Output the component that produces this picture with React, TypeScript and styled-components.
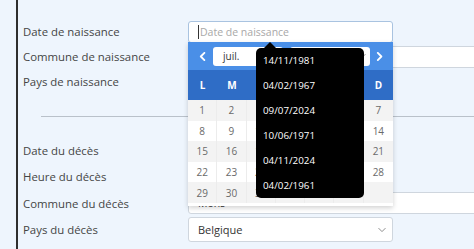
import styled, { createGlobalStyle } from "styled-components";

const GlobalStyle = createGlobalStyle`
  body {
    margin: 0;
    background: #eef5fd;
    overflow: hidden;
    font-family: "Open Sans", "Noto Sans", sans-serif;
  }
`;

const Page = styled.div`
  position: relative;
  margin-left: 16px;
  border-left: 2px solid #2e2e2e;
  height: 249px;
  width: 458px;
  overflow: hidden;
  padding-top: 19px;
  box-sizing: border-box;
`;

const Group = styled.div<{ $top: number }>`
  display: flex;
  flex-direction: column;
  margin-top: ${(p) => p.$top}px;
`;

const Row = styled.div<{ $h: number }>`
  display: grid;
  grid-template-columns: 170px auto;
  align-items: center;
  height: ${(p) => p.$h}px;
`;

const Label = styled.div`
  padding-left: 5px;
  font-size: 11.4px;
  color: #454545;
`;

const Field = styled.div<{ $w: number; $focus?: boolean }>`
  width: ${(p) => p.$w}px;
  height: 22px;
  box-sizing: border-box;
  background: #fff;
  border: 1px solid ${(p) => (p.$focus ? "#a9c3e0" : "#cfd6de")};
  border-radius: 3px;
  display: flex;
  align-items: center;
  padding-left: 9px;
  font-size: 10.5px;
  color: #333;
`;

const Placeholder = styled.span`
  color: #a8a8a8;
  border-left: 1px solid #333;
  padding-left: 1px;
`;

const SelectBox = styled(Field)`
  height: 25px;
  justify-content: space-between;
  padding-right: 6px;
  font-size: 11px;
`;

const Divider = styled.div`
  margin-top: 22px;
  margin-left: 23px;
  border-top: 1px solid #b9c1ca;
`;

const Calendar = styled.div`
  position: absolute;
  left: 170px;
  top: 42px;
  width: 205px;
  background: #fff;
  box-shadow: 0 2px 5px rgba(0, 0, 0, 0.18);
  padding-bottom: 3px;
`;

const CalHeader = styled.div`
  height: 28px;
  background: #4a8fe7;
  display: flex;
  align-items: center;
  padding-left: 10px;
  gap: 5px;
`;

const NavArrow = styled.div`
  width: 10px;
  display: flex;
  justify-content: center;
`;

const MiniSelect = styled.div<{ $w: number; $gap?: number }>`
  width: ${(p) => p.$w}px;
  margin-left: ${(p) => p.$gap ?? 0}px;
  height: 19px;
  box-sizing: border-box;
  background: #fff;
  border-radius: 3px;
  display: flex;
  align-items: center;
  justify-content: space-between;
  padding: 0 4px 0 10px;
  font-size: 10px;
  color: #333;
`;

const WeekDays = styled.div`
  height: 30px;
  background: #2f6dc6;
  display: grid;
  grid-template-columns: repeat(7, 1fr);
  align-items: center;
  text-align: center;
  font-size: 10px;
  font-weight: 700;
  color: #fff;
`;

const Week = styled.div<{ $shade: boolean }>`
  height: 20.6px;
  display: grid;
  grid-template-columns: repeat(7, 1fr);
  background: ${(p) => (p.$shade ? "#f3f3f3" : "#fff")};
`;

const Day = styled.div`
  display: flex;
  align-items: center;
  justify-content: center;
  font-size: 10px;
  color: #6a6a6a;
  border-right: 1px solid #ececec;
  &:last-child {
    border-right: none;
  }
`;

const Tooltip = styled.div`
  position: absolute;
  left: 238px;
  top: 48px;
  width: 108px;
  height: 150px;
  background: #000;
  border-radius: 5px;
  display: flex;
  flex-direction: column;
  &::before {
    content: "";
    position: absolute;
    left: 8px;
    top: -6px;
    border-left: 6px solid transparent;
    border-right: 6px solid transparent;
    border-bottom: 6px solid #000;
  }
`;

const TipItem = styled.div`
  height: 25px;
  display: flex;
  align-items: center;
  padding-left: 7px;
  font-size: 9.8px;
  color: #fff;
`;

const Chevron = ({ dir, color, size }: { dir: "left" | "right" | "down"; color: string; size: number }) => {
  const d = dir === "left" ? "M6 1 L2 5 L6 9" : dir === "right" ? "M2 1 L6 5 L2 9" : "M1 3 L5 7 L9 3";
  return (
    <svg width={size} height={size} viewBox="0 0 10 10">
      <path d={d} fill="none" stroke={color} strokeWidth={dir === "down" ? 1.2 : 2} strokeLinecap="round" strokeLinejoin="round" />
    </svg>
  );
};

const days: (number | null)[] = Array.from({ length: 35 }, (_, i) => (i < 31 ? i + 1 : null));
const weeks = [0, 1, 2, 3, 4].map((w) => days.slice(w * 7, w * 7 + 7));
const dates = ["14/11/1981", "04/02/1967", "09/07/2024", "10/06/1971", "04/11/2024", "04/02/1961"];

const App = () => {
  return (
    <>
      <GlobalStyle />
      <Page>
        <Group $top={0}>
          <Row $h={25}>
            <Label>Date de naissance</Label>
            <Field $w={205} $focus>
              <Placeholder>Date de naissance</Placeholder>
            </Field>
          </Row>
          <Row $h={25}>
            <Label>Commune de naissance</Label>
            <Field $w={300} />
          </Row>
          <Row $h={25}>
            <Label>Pays de naissance</Label>
            <Field $w={205} />
          </Row>
        </Group>
        <Divider />
        <Group $top={20}>
          <Row $h={26.5}>
            <Label>Date du décès</Label>
            <Field $w={205} />
          </Row>
          <Row $h={26.5}>
            <Label>Heure du décès</Label>
            <Field $w={205} />
          </Row>
          <Row $h={26.5}>
            <Label>Commune du décès</Label>
            <Field $w={300}>Mons</Field>
          </Row>
          <Row $h={26.5}>
            <Label>Pays du décès</Label>
            <SelectBox $w={205}>
              Belgique
              <Chevron dir="down" color="#888" size={8} />
            </SelectBox>
          </Row>
        </Group>

        <Calendar>
          <CalHeader>
            <NavArrow>
              <Chevron dir="left" color="#fff" size={9} />
            </NavArrow>
            <MiniSelect $w={70}>juil.</MiniSelect>
            <MiniSelect $w={80} $gap={2}>
              2024
              <Chevron dir="down" color="#888" size={8} />
            </MiniSelect>
            <NavArrow>
              <Chevron dir="right" color="#fff" size={9} />
            </NavArrow>
          </CalHeader>
          <WeekDays>
            {["L", "M", "M", "J", "V", "S", "D"].map((d, i) => (
              <div key={i}>{d}</div>
            ))}
          </WeekDays>
          {weeks.map((w, i) => (
            <Week key={i} $shade={i % 2 === 0}>
              {w.map((d, j) => (
                <Day key={j}>{d ?? ""}</Day>
              ))}
            </Week>
          ))}
        </Calendar>

        <Tooltip>
          {dates.map((d, i) => (
            <TipItem key={i}>{d}</TipItem>
          ))}
        </Tooltip>
      </Page>
    </>
  );
};

export default App;
